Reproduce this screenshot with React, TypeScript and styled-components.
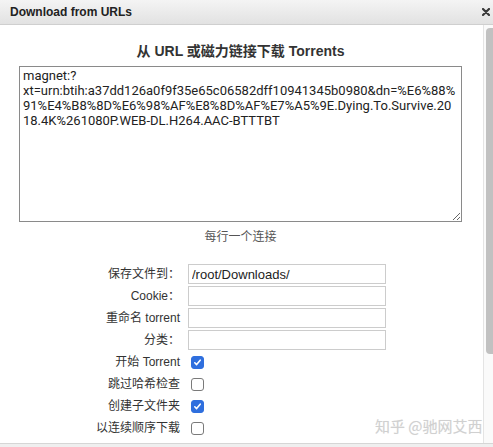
import React from "react";
import styled, { createGlobalStyle } from "styled-components";

const GlobalStyle = createGlobalStyle`
  html, body { margin: 0; padding: 0; background: #fff; }
  body { font-family: "Liberation Sans", "Noto Sans CJK SC", Arial, sans-serif; color: #333; }
  * { box-sizing: border-box; }
`;

const Dialog = styled.div`
  width: 493px;
  height: 447px;
  display: flex;
  flex-direction: column;
  overflow: hidden;
  background: #fff;
`;

const TitleBar = styled.div`
  height: 25px;
  flex: none;
  display: flex;
  align-items: center;
  justify-content: space-between;
  padding: 0 1px 1px 10px;
  background: linear-gradient(#f4f4f4, #e2e2e2);
  border-bottom: 1px solid #cfcfcf;
`;

const Title = styled.div`
  font-family: "Liberation Sans", Arial, sans-serif;
  font-size: 12px;
  font-weight: bold;
  color: #222;
`;

const Close = styled.button`
  width: 12px;
  height: 12px;
  padding: 0;
  border: 0;
  background: transparent;
  display: flex;
  align-items: center;
  justify-content: center;
`;

const Body = styled.div`
  flex: 1;
  display: flex;
  min-height: 0;
`;

const Content = styled.div`
  position: relative;
  flex: 1;
  padding: 17px 0 0 19px;
`;

const Heading = styled.h2`
  margin: 0 0 6px;
  width: 443px;
  text-align: center;
  font-size: 14px;
  line-height: 18px;
  font-weight: bold;
  color: #333;
  font-family: "Liberation Sans", "Noto Sans CJK SC", Arial, sans-serif;
`;

const UrlArea = styled.textarea`
  display: block;
  width: 443px;
  height: 156px;
  margin: 0;
  padding: 1px 3px;
  border: 1px solid #8a8a8a;
  border-radius: 0;
  resize: vertical;
  font-family: Roboto, "Noto Sans", sans-serif;
  font-size: 13px;
  line-height: 15px;
  color: #222;
  white-space: pre-wrap;
  overflow-wrap: anywhere;
  overflow: hidden;
  outline: none;
`;

const Hint = styled.div`
  width: 443px;
  margin-top: 6px;
  text-align: center;
  font-size: 12px;
  line-height: 16px;
  color: #555;
  font-family: "Noto Sans CJK SC", sans-serif;
`;

const Form = styled.div`
  margin: 20px 0 0 -19px;
  display: grid;
  grid-template-columns: 180px 198px;
  column-gap: 8px;
  row-gap: 2px;
  align-items: center;
`;

const Label = styled.label`
  text-align: right;
  font-size: 12px;
  line-height: 20px;
  color: #333;
  white-space: nowrap;
  font-family: "Liberation Sans", "Noto Sans CJK SC", Arial, sans-serif;
`;

const TextInput = styled.input`
  height: 20px;
  width: 198px;
  margin: 0;
  padding: 0 3px;
  border: 1px solid #cccccc;
  border-radius: 0;
  font-family: "Liberation Sans", Arial, sans-serif;
  font-size: 13px;
  color: #222;
  outline: none;
`;

const CheckCell = styled.div`
  height: 19.7px;
  display: flex;
  align-items: center;
  padding-left: 3px;
`;

const Box = styled.span<{ $checked: boolean }>`
  width: 13px;
  height: 13px;
  border-radius: 3px;
  display: flex;
  align-items: center;
  justify-content: center;
  background: ${(p) => (p.$checked ? "#2f6fde" : "#fff")};
  border: 1px solid ${(p) => (p.$checked ? "#2f6fde" : "#7a7a7a")};
`;

const Watermark = styled.div`
  position: absolute;
  left: 375px;
  top: 391px;
  font-size: 15px;
  line-height: 20px;
  color: #d0d0d0;
  white-space: nowrap;
  font-family: "Noto Sans CJK SC", sans-serif;
  text-shadow: 0 0 1px rgba(0, 0, 0, 0.08);
`;

const ScrollTrack = styled.div`
  width: 10px;
  flex: none;
  border-left: 1px solid #e4e4e4;
  background: #fafafa;
  padding: 3px 0 0 2px;
`;

const ScrollThumb = styled.div`
  width: 8px;
  height: 326px;
  background: #c1c1c1;
  border-radius: 4px 0 0 4px;
`;

const Footer = styled.div`
  height: 4px;
  flex: none;
  border-top: 1px solid #d6d6d6;
  background: #efefef;
`;

const magnet = [
  "magnet:?",
  "xt=urn:btih:a37dd126a0f9f35e65c06582dff10941345b0980&dn=%E6%88%",
  "91%E4%B8%8D%E6%98%AF%E8%8D%AF%E7%A5%9E.Dying.To.Survive.20",
  "18.4K%261080P.WEB-DL.H264.AAC-BTTTBT",
].join("\n");

const Check = ({ checked }: { checked: boolean }) => (
  <CheckCell>
    <Box $checked={checked}>
      {checked && (
        <svg width="9" height="9" viewBox="0 0 9 9">
          <path d="M1.8 4.8 L3.6 6.6 L7.2 2.2" fill="none" stroke="#fff" strokeWidth="1.6" strokeLinecap="round" strokeLinejoin="round" />
        </svg>
      )}
    </Box>
  </CheckCell>
);

export default function App() {
  const textFields: [string, string][] = [
    ["保存文件到：", "/root/Downloads/"],
    ["Cookie：", ""],
    ["重命名 torrent", ""],
    ["分类：", ""],
  ];
  const checks: [string, boolean][] = [
    ["开始 Torrent", true],
    ["跳过哈希检查", false],
    ["创建子文件夹", true],
    ["以连续顺序下载", false],
  ];
  return (
    <>
      <GlobalStyle />
      <Dialog>
        <TitleBar>
          <Title>Download from URLs</Title>
          <Close aria-label="close">
            <svg width="8" height="8" viewBox="0 0 8 8">
              <path d="M1 1 L7 7 M7 1 L1 7" stroke="#3a3a3a" strokeWidth="2.2" strokeLinecap="round" />
            </svg>
          </Close>
        </TitleBar>
        <Body>
          <Content>
            <Heading>从 URL 或磁力链接下载 Torrents</Heading>
            <UrlArea defaultValue={magnet} spellCheck={false} />
            <Hint>每行一个连接</Hint>
            <Form>
              {textFields.map(([label, value]) => (
                <React.Fragment key={label}>
                  <Label>{label}</Label>
                  <TextInput defaultValue={value} />
                </React.Fragment>
              ))}
              {checks.map(([label, checked]) => (
                <React.Fragment key={label}>
                  <Label>{label}</Label>
                  <Check checked={checked} />
                </React.Fragment>
              ))}
            </Form>
            <Watermark>知乎 @驰网艾西</Watermark>
          </Content>
          <ScrollTrack>
            <ScrollThumb />
          </ScrollTrack>
        </Body>
        <Footer />
      </Dialog>
    </>
  );
}
